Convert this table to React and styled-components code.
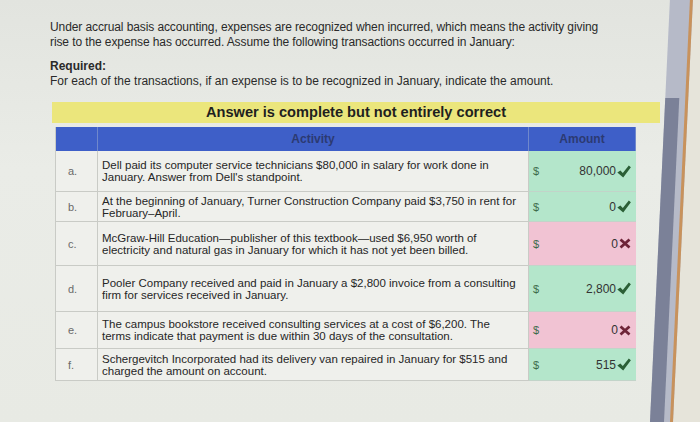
import React from "react";
import styled, { createGlobalStyle } from "styled-components";

const GlobalStyle = createGlobalStyle`
  html, body {
    margin: 0;
    padding: 0;
    height: 100%;
  }
  body {
    background: linear-gradient(180deg, #e2e4df 0%, #eaece7 40%, #e8eae4 100%);
    font-family: "Liberation Sans", Arial, sans-serif;
    color: #2a2a2a;
    overflow: hidden;
  }
`;

const Screen = styled.div`
  display: flex;
  width: 700px;
  height: 422px;
  overflow: hidden;
`;

const Content = styled.div`
  width: 650px;
  flex-shrink: 0;
  box-sizing: border-box;
  padding: 20px 0 0 50px;
  position: relative;
  z-index: 1;
`;

const Intro = styled.p`
  margin: 0;
  font-size: 12px;
  line-height: 15px;
  letter-spacing: -0.1px;
`;

const Required = styled.div`
  margin-top: 9px;
  font-size: 12px;
  line-height: 15px;
  b {
    font-weight: bold;
  }
`;

const Banner = styled.div`
  margin-top: 13px;
  margin-left: 2px;
  width: 608px;
  height: 21px;
  background: #ebe67c;
  text-align: center;
  font-size: 14.6px;
  font-weight: bold;
  line-height: 21px;
  color: #1f1f1f;
`;

const Table = styled.div`
  margin: 4px 0 0 5px;
  width: 580px;
  display: grid;
  grid-template-columns: 42px 431px 107px;
  background: #eff0ec;
  border-left: 1px solid #c9cbc6;
`;

const HeadCell = styled.div`
  height: 24px;
  background: #3e5fc8;
  border-right: 1px solid #7088cc;
  color: #2c3a72;
  font-size: 12px;
  font-weight: bold;
  line-height: 24px;
  text-align: center;
`;

const Letter = styled.div`
  min-height: ${(p) => p.h}px;
  border-right: 1px solid #c9cbc6;
  border-bottom: 1px solid #c9cbc6;
  color: #6a6a6a;
  font-size: 11px;
  display: flex;
  align-items: center;
  padding-left: 12px;
  box-sizing: border-box;
`;

const Desc = styled.div`
  min-height: ${(p) => p.h}px;
  border-right: 1px solid #c9cbc6;
  border-bottom: 1px solid #c9cbc6;
  font-size: 11.5px;
  line-height: 12px;
  color: #262626;
  display: flex;
  align-items: center;
  padding-left: 4px;
  box-sizing: border-box;
  white-space: nowrap;
`;

const Amount = styled.div`
  min-height: ${(p) => p.h}px;
  background: ${(p) => (p.ok ? "#b4e6cb" : "#f1c3d3")};
  border-bottom: 1px solid #c2d4c9;
  display: flex;
  align-items: center;
  justify-content: space-between;
  padding: 0 5px 0 4px;
  box-sizing: border-box;
  font-size: 12px;
  color: #333;
`;

const Dollar = styled.span`
  color: #3f6b4c;
  font-size: 11px;
`;

const Value = styled.span`
  display: flex;
  align-items: center;
  gap: 1px;
`;

function Check() {
  return (
    <svg width="14" height="13" viewBox="0 0 14 13">
      <path d="M0.3 7.4 L3.4 5.4 L5.8 8 L11.8 0.6 L13.9 2.3 L6.2 12.4 Z" fill="#2b5f36" />
    </svg>
  );
}

function Cross() {
  return (
    <svg width="12" height="11" viewBox="0 0 12 11">
      <path d="M1.5 1.5 L10.5 9.5 M10.5 1.5 L1.5 9.5" stroke="#6e2438" strokeWidth="2.8" strokeLinecap="butt" />
    </svg>
  );
}

const rows = [
  {
    l: "a.",
    h: 41,
    t: ["Dell paid its computer service technicians $80,000 in salary for work done in", "January. Answer from Dell's standpoint."],
    v: "80,000",
    ok: true,
  },
  {
    l: "b.",
    h: 30,
    t: ["At the beginning of January, Turner Construction Company paid $3,750 in rent for", "February–April."],
    v: "0",
    ok: true,
  },
  {
    l: "c.",
    h: 44,
    t: ["McGraw-Hill Education—publisher of this textbook—used $6,950 worth of", "electricity and natural gas in January for which it has not yet been billed."],
    v: "0",
    ok: false,
  },
  {
    l: "d.",
    h: 46,
    t: ["Pooler Company received and paid in January a $2,800 invoice from a consulting", "firm for services received in January."],
    v: "2,800",
    ok: true,
  },
  {
    l: "e.",
    h: 37,
    t: ["The campus bookstore received consulting services at a cost of $6,200. The", "terms indicate that payment is due within 30 days of the consultation."],
    v: "0",
    ok: false,
  },
  {
    l: "f.",
    h: 32,
    t: ["Schergevitch Incorporated had its delivery van repaired in January for $515 and", "charged the amount on account."],
    v: "515",
    ok: true,
  },
];

export default function App() {
  return (
    <>
      <GlobalStyle />
      <Screen>
        <Content>
          <Intro>
            Under accrual basis accounting, expenses are recognized when incurred, which means the activity giving
            <br />
            rise to the expense has occurred. Assume the following transactions occurred in January:
          </Intro>
          <Required>
            <b>Required:</b>
            <br />
            For each of the transactions, if an expense is to be recognized in January, indicate the amount.
          </Required>
          <Banner>Answer is complete but not entirely correct</Banner>
          <Table>
            <HeadCell />
            <HeadCell>Activity</HeadCell>
            <HeadCell>Amount</HeadCell>
            {rows.map((r) => (
              <React.Fragment key={r.l}>
                <Letter h={r.h}>{r.l}</Letter>
                <Desc h={r.h}>
                  <div>
                    {r.t[0]}
                    <br />
                    {r.t[1]}
                  </div>
                </Desc>
                <Amount h={r.h} ok={r.ok}>
                  <Dollar>$</Dollar>
                  <Value>
                    {r.v}
                    {r.ok ? <Check /> : <Cross />}
                  </Value>
                </Amount>
              </React.Fragment>
            ))}
          </Table>
        </Content>
        <Scrollbar>
          <Thumb />
        </Scrollbar>
        <Edge />
      </Screen>
    </>
  );
}

const Scrollbar = styled.div`
  width: 20px;
  flex-shrink: 0;
  background: #b6bac8;
  display: flex;
  flex-direction: column;
  justify-content: flex-end;
  align-items: flex-start;
  transform: skewX(-2.7deg);
  transform-origin: bottom;
  border-right: 3px solid #c8925c;
`;

const Thumb = styled.div`
  width: 14px;
  height: 324px;
  background: #7b8198;
`;

const Edge = styled.div`
  flex: 1;
  background: #e6e4da;
`;
